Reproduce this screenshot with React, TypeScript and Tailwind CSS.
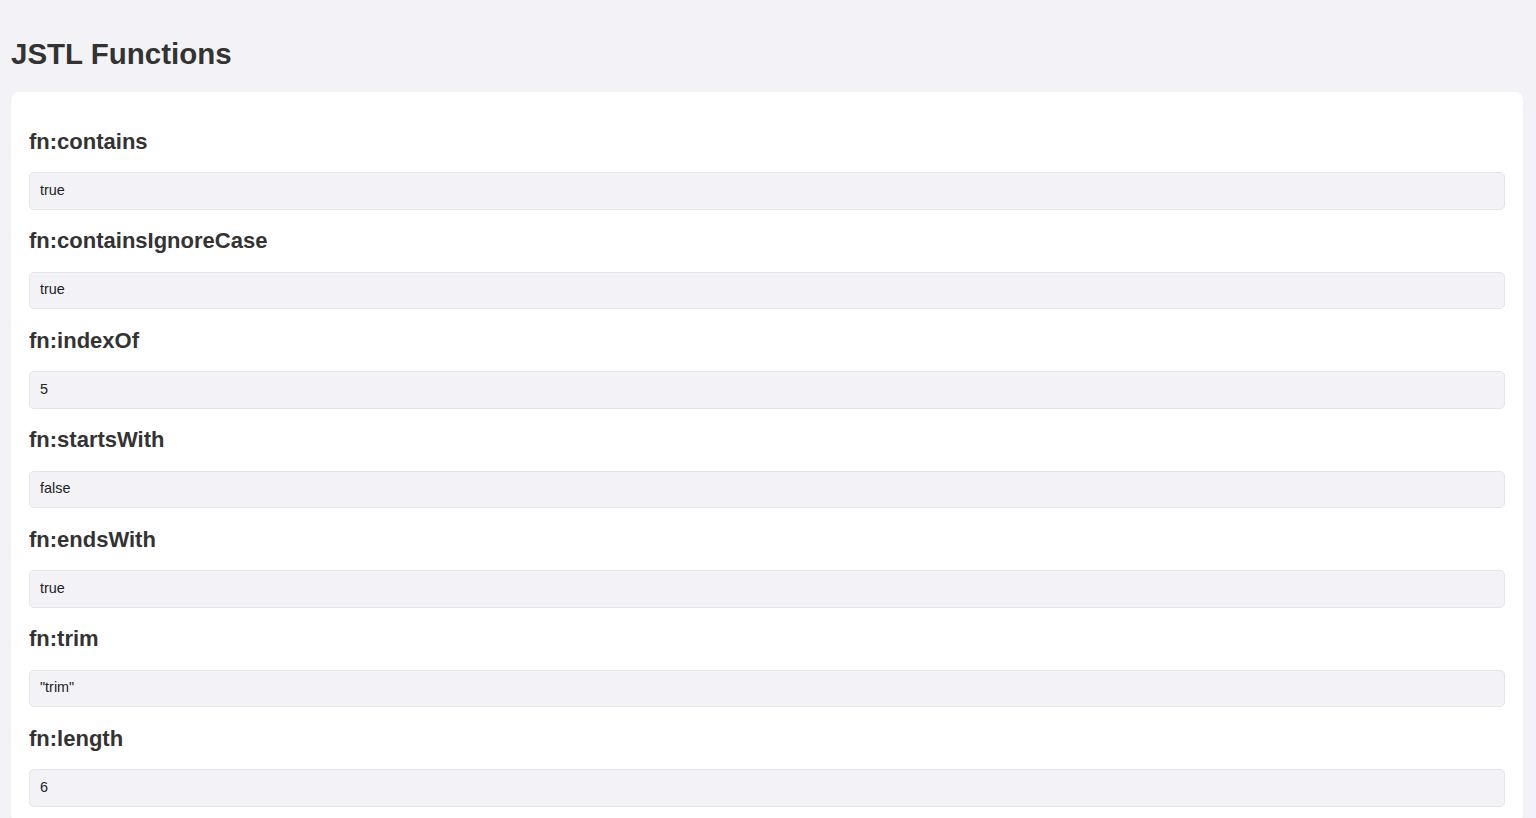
const ROWS: { name: string; value: string }[] = [
  { name: "fn:contains", value: "true" },
  { name: "fn:containsIgnoreCase", value: "true" },
  { name: "fn:indexOf", value: "5" },
  { name: "fn:startsWith", value: "false" },
  { name: "fn:endsWith", value: "true" },
  { name: "fn:trim", value: "\"trim\"" },
  { name: "fn:length", value: "6" },
];

export default function App() {
  return (
    <div
      className="min-h-screen bg-[#f3f3f7] text-[#333] pl-[11px] pr-[13px] pb-6"
      style={{ fontFamily: '"Liberation Sans", Arial, Helvetica, sans-serif' }}
    >
      <h1 className="text-[29.5px] font-bold leading-[34px] pt-[37px] pb-[21px]">JSTL Functions</h1>

      <div className="bg-white rounded-[8px] px-[18px] pt-[18px] pb-4 shadow-[0_1px_3px_rgba(0,0,0,0.04)]">
        {ROWS.map(r => (
          <section key={r.name}>
            <h2 className="text-[22px] font-bold leading-[24px] mt-[19.5px] mb-[18.5px]">{r.name}</h2>
            <div className="h-[37.5px] flex items-center px-[10px] bg-[#f3f3f7] border border-[#e4e4e9] rounded-[5px] text-[14.4px] text-[#222]">
              {r.value}
            </div>
          </section>
        ))}
      </div>
    </div>
  );
}
